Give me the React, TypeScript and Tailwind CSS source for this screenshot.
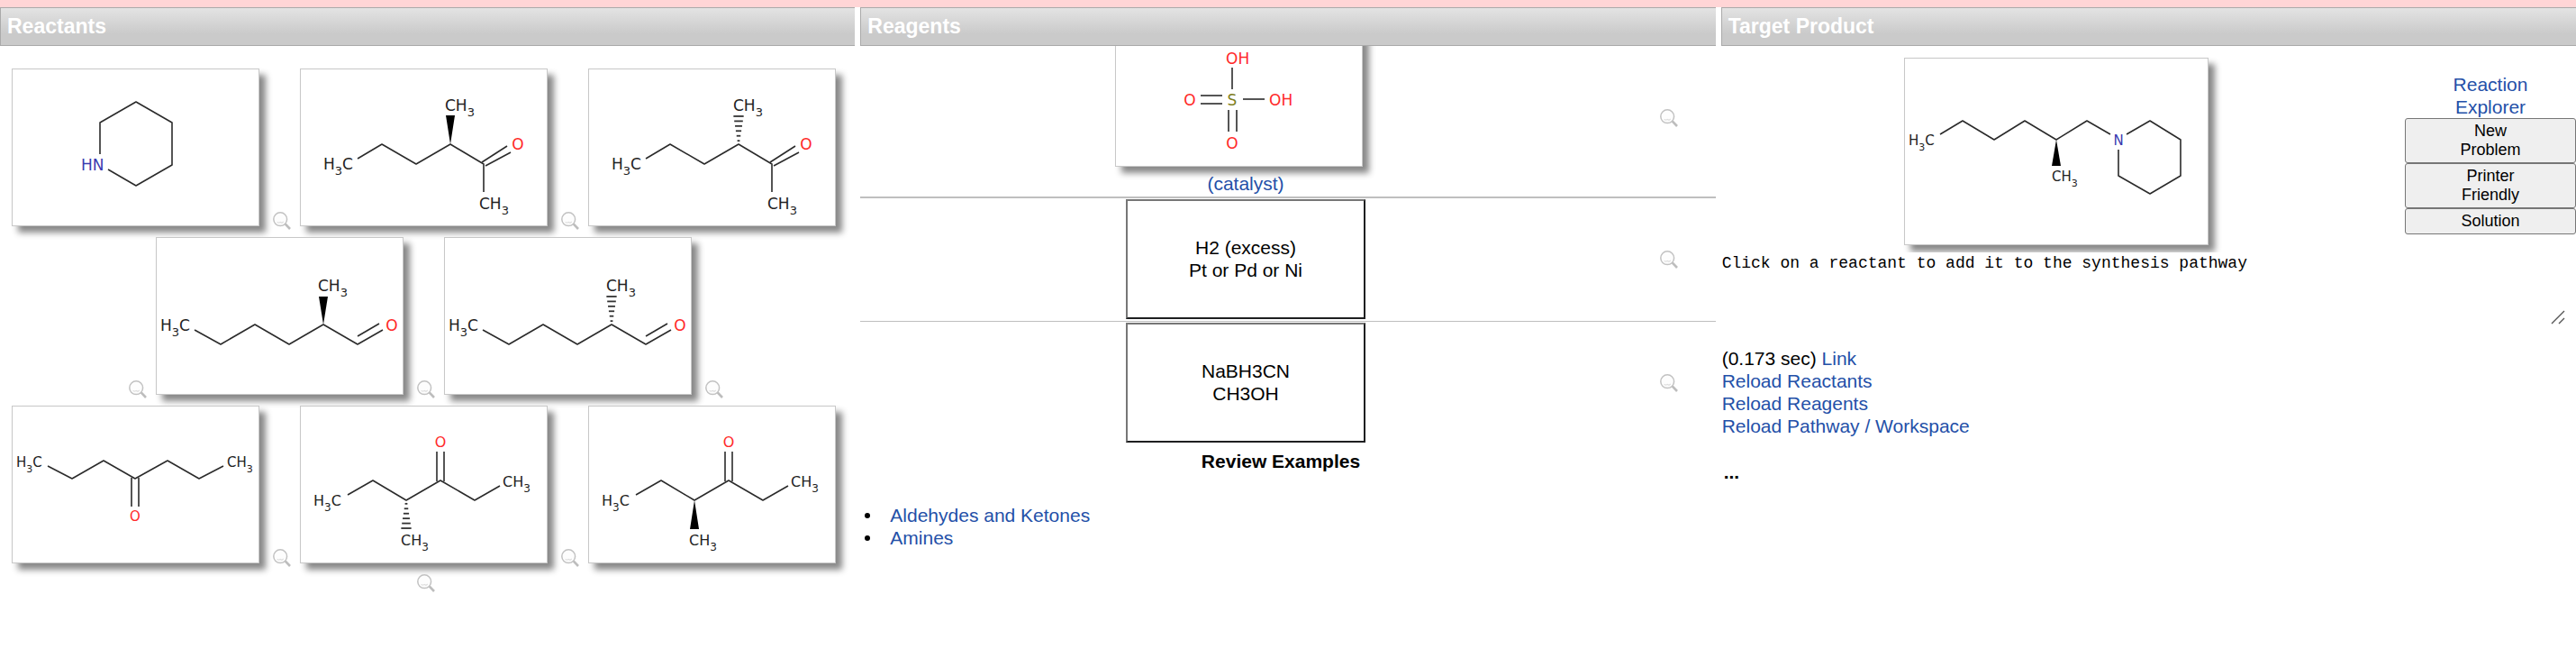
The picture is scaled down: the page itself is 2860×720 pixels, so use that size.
import { Fragment } from "react";
import type { ReactNode } from "react";

type Piece =
  | { kind: "bond"; points: string }
  | { kind: "wedge"; x: number; tip: number; base: number }
  | { kind: "hash"; x: number; tip: number; base: number }
  | { kind: "label"; x: number; y: number; text: string; color?: string; middle?: boolean };

const RED = "#ff2a2a";
const BLUE = "#3a3ab0";
const OLIVE = "#7f7f1f";

function bond(points: string): Piece {
  return { kind: "bond", points };
}

function wedge(x: number, tip: number, base: number): Piece {
  return { kind: "wedge", x, tip, base };
}

function hash(x: number, tip: number, base: number): Piece {
  return { kind: "hash", x, tip, base };
}

function label(x: number, y: number, text: string, color?: string, middle?: boolean): Piece {
  return { kind: "label", x, y, text, color, middle };
}

const methylKetone = (stereo: Piece): Piece[] => [
  label(26, 112, "H3C"),
  bond("64,100 91,84 129,106 167,84 204,106 204,137"),
  bond("202,104 230,86"),
  bond("206,108 234,93"),
  stereo,
  label(161, 47, "CH3"),
  label(242, 90, "O", RED, true),
  label(199, 156, "CH3"),
];

const aldehyde = (stereo: Piece): Piece[] => [
  label(5, 104, "H3C"),
  bond("43,103 72,119 110,97 148,119 186,97 224,119 252,103"),
  bond("224,110 248,96"),
  stereo,
  label(180, 60, "CH3"),
  label(262, 104, "O", RED, true),
];

const ethylKetone = (stereo: Piece): Piece[] => [
  label(15, 111, "H3C"),
  bond("53,99 81,83 118,105 156,83 194,105 222,89"),
  bond("152,84 152,51"),
  bond("160,84 160,51"),
  stereo,
  label(156, 46, "O", RED, true),
  label(225, 90, "CH3"),
  label(112, 155, "CH3"),
];

const piperidine: Piece[] = [
  bond("98,95 98,60 138,37 178,60 178,107 138,130 107,112"),
  label(77, 113, "HN", BLUE),
];

const heptanone: Piece[] = [
  label(5, 68, "H3C"),
  bond("40,67 67,81 102,61 137,81 173,61 208,81 235,67"),
  bond("133,80 133,112"),
  bond("141,80 141,112"),
  label(137, 128, "O", RED, true),
  label(239, 68, "CH3"),
];

const sulfuricAcid: Piece[] = [
  label(123, 61, "OH", RED),
  bond("130,65 130,89"),
  label(83, 107, "O", RED, true),
  bond("95,96 119,96"),
  bond("95,105 119,105"),
  label(130, 107, "S", OLIVE, true),
  bond("142,100 166,100"),
  label(171, 107, "OH", RED),
  bond("126,112 126,136"),
  bond("135,112 135,136"),
  label(130, 155, "O", RED, true),
];

const targetProduct: Piece[] = [
  label(5, 97, "H3C"),
  bond("40,85 65,70 100,91 134,70 169,91 203,70 229,85"),
  bond("247,85 273,70 307,91 307,131 273,151 238,131 238,102"),
  label(238, 97, "N", BLUE, true),
  wedge(169, 91, 120),
  label(164, 137, "CH3"),
];

const HASH_STEPS = [0.12, 0.29, 0.46, 0.63, 0.8, 0.97];

function Drawing({
  width,
  height,
  fontSize,
  pieces,
}: {
  width: number;
  height: number;
  fontSize: number;
  pieces: Piece[];
}) {
  const draw = (p: Piece, key: number): ReactNode => {
    if (p.kind === "bond") {
      return <polyline key={key} points={p.points} fill="none" stroke="#2b2b2b" strokeWidth="1.6" strokeLinejoin="round" />;
    }
    if (p.kind === "wedge") {
      return <polygon key={key} points={`${p.x},${p.tip} ${p.x - 5},${p.base} ${p.x + 5},${p.base}`} fill="#000" />;
    }
    if (p.kind === "hash") {
      return (
        <g key={key} stroke="#333" strokeWidth="1.8">
          {HASH_STEPS.map((s) => {
            const y = p.tip + (p.base - p.tip) * s;
            const half = 0.8 + 5 * s;
            return <line key={s} x1={p.x - half} x2={p.x + half} y1={y} y2={y} />;
          })}
        </g>
      );
    }
    const parts = p.text.split("3");
    return (
      <text key={key} x={p.x} y={p.y} fill={p.color ?? "#222"} fontSize={fontSize} textAnchor={p.middle ? "middle" : "start"}>
        {parts[0]}
        {parts.length > 1 && (
          <>
            <tspan dy="6" fontSize={fontSize - 4}>
              3
            </tspan>
            <tspan dy="-6">{parts[1]}</tspan>
          </>
        )}
      </text>
    );
  };
  return (
    <svg
      width={width}
      height={height}
      viewBox={`1 1 ${width} ${height}`}
      className="block font-['DejaVu_Sans',sans-serif]"
      aria-hidden="true"
    >
      {pieces.map(draw)}
    </svg>
  );
}

const cardStyle = "block shrink-0 cursor-pointer border border-[#c8c8c8] bg-white shadow-[7px_7px_7px_#888]";

function MoleculeCard({ pieces, fontSize, name }: { pieces: Piece[]; fontSize: number; name: string }) {
  return (
    <button type="button" aria-label={name} className={cardStyle}>
      <Drawing width={273} height={173} fontSize={fontSize} pieces={pieces} />
    </button>
  );
}

function Magnifier() {
  return (
    <a href="#zoom" aria-label="Enlarge" className="block shrink-0">
      <svg width="20" height="20" viewBox="0 0 20 20" fill="none" className="block">
        <path d="M13.4 13.2 19 19" stroke="#bdbdbd" strokeWidth="2.6" />
        <circle cx="8.2" cy="8.2" r="7.4" fill="#fdfdfd" stroke="#c2c2c2" strokeWidth="1.5" />
        <path d="M4.6 11.4 6.4 12.2 8.2 11.4 10 12.2 11.8 11" stroke="#dedede" strokeWidth="1.2" />
      </svg>
    </a>
  );
}

function PanelHeader({ children }: { children: ReactNode }) {
  return (
    <h2 className="border-y border-l border-[#aaa] bg-linear-to-b from-[#e3e3e3] to-[#cacaca] to-70% px-[7px] py-2 text-[23px] leading-[25px] font-bold text-white">
      {children}
    </h2>
  );
}

interface Reactant {
  name: string;
  pieces: Piece[];
  fontSize: number;
}

const reactants: Reactant[] = [
  { name: "piperidine", pieces: piperidine, fontSize: 17 },
  { name: "methyl ketone, wedge", pieces: methylKetone(wedge(167, 84, 52)), fontSize: 17 },
  { name: "methyl ketone, hash", pieces: methylKetone(hash(167, 84, 52)), fontSize: 17 },
  { name: "aldehyde, wedge", pieces: aldehyde(wedge(186, 97, 66)), fontSize: 17 },
  { name: "aldehyde, hash", pieces: aldehyde(hash(186, 97, 65)), fontSize: 17 },
  { name: "heptanone", pieces: heptanone, fontSize: 15 },
  { name: "ethyl ketone, hash", pieces: ethylKetone(hash(118, 105, 137)), fontSize: 16 },
  { name: "ethyl ketone, wedge", pieces: ethylKetone(wedge(118, 105, 137)), fontSize: 16 },
];

const linkStyle = "text-[#2450a8] hover:underline";

function Reactants() {
  return (
    <section>
      <PanelHeader>Reactants</PanelHeader>
      <div className="flex flex-wrap items-end justify-center gap-y-2 pt-[25px]">
        {reactants.map((r) => (
          <Fragment key={r.name}>
            <div className="mr-[11px] ml-0.5 pb-1">
              <MoleculeCard {...r} />
            </div>
            <div className="pr-2 pl-1">
              <Magnifier />
            </div>
          </Fragment>
        ))}
      </div>
    </section>
  );
}

function ReagentRow({ children, captioned }: { children: ReactNode; captioned?: boolean }) {
  return (
    <li className="grid grid-cols-[1fr_94px] items-center">
      <div className="flex flex-col items-center">{children}</div>
      <div className={captioned ? "flex justify-center pr-2.5 pb-2" : "flex justify-center pr-2.5"}>
        <Magnifier />
      </div>
    </li>
  );
}

function ConditionBox({ lines }: { lines: string[] }) {
  return (
    <button
      type="button"
      className="h-[133px] w-[266px] cursor-pointer border-2 border-t-[#767676] border-r-[#1e1f20] border-b-[#1e1f20] border-l-[#767676] bg-white pb-0.5 text-center"
    >
      {lines.map((line) => (
        <span key={line} className="block">
          {line}
        </span>
      ))}
    </button>
  );
}

const examples = [
  { href: "#aldehydes", title: "Aldehydes and Ketones" },
  { href: "#amines", title: "Amines" },
];

function Reagents() {
  return (
    <section>
      <PanelHeader>Reagents</PanelHeader>
      <ul className="overflow-hidden">
        <ReagentRow captioned>
          <div className="-mt-[41px] mr-[15px]">
            <MoleculeCard name="sulfuric acid" pieces={sulfuricAcid} fontSize={17} />
          </div>
          <a href="#catalyst" className={`mt-1.5 mb-0.5 ${linkStyle}`}>
            (catalyst)
          </a>
        </ReagentRow>
        <li className="mb-px h-0.5 bg-[#bfbfbf]" />
        <ReagentRow>
          <ConditionBox lines={["H2 (excess)", "Pt or Pd or Ni"]} />
        </ReagentRow>
        <li className="mt-0.5 mb-px h-px bg-[#bfbfbf]" />
        <ReagentRow>
          <ConditionBox lines={["NaBH3CN", "CH3OH"]} />
        </ReagentRow>
      </ul>
      <h3 className="mt-2 pr-4 text-center font-bold">Review Examples</h3>
      <ul className="mt-[35px] pl-[5px]">
        {examples.map((e) => (
          <li
            key={e.href}
            className="flex items-center gap-[22px] before:size-1.5 before:rounded-full before:bg-black before:content-['']"
          >
            <a href={e.href} className={linkStyle}>
              {e.title}
            </a>
          </li>
        ))}
      </ul>
    </section>
  );
}

const buttonStyle =
  "w-full cursor-pointer rounded-[3px] border border-[#767676] bg-[#efefef] px-2 py-[3px] text-[18px] leading-[21px] text-black";

function TargetProduct() {
  return (
    <section>
      <PanelHeader>Target Product</PanelHeader>
      <div className="grid grid-cols-[1fr_190px] items-start">
        <div className="flex justify-center pt-[13px] pb-2">
          <div className={`${cardStyle} mr-[15px]`}>
            <Drawing width={336} height={206} fontSize={15} pieces={targetProduct} />
          </div>
        </div>
        <div className="flex flex-col pt-[30px] text-center">
          <a href="#explorer" className={linkStyle}>
            Reaction
            <br />
            Explorer
          </a>
          <button type="button" className={buttonStyle}>
            New
            <br />
            Problem
          </button>
          <button type="button" className={buttonStyle}>
            Printer
            <br />
            Friendly
          </button>
          <button type="button" className={buttonStyle}>
            Solution
          </button>
        </div>
      </div>
      <div className="relative mr-2.5">
        <textarea
          aria-label="Messages"
          readOnly
          rows={4}
          defaultValue="Click on a reactant to add it to the synthesis pathway"
          className="block w-full resize-none bg-white px-px py-0.5 font-['Liberation_Mono',monospace] text-[18px] leading-5 text-black outline-none"
        />
        <svg className="absolute right-0.5 bottom-1" width="16" height="16" viewBox="0 0 16 16" aria-hidden="true">
          <path d="M1 15 15 1M9 15 15 9" stroke="#555" strokeWidth="1.4" />
        </svg>
      </div>
      <div className="flex flex-col items-start px-px pt-[21px]">
        <p>
          (0.173 sec){" "}
          <a href="#link" className={linkStyle}>
            Link
          </a>
        </p>
        <a href="#reactants" className={linkStyle}>
          Reload Reactants
        </a>
        <a href="#reagents" className={linkStyle}>
          Reload Reagents
        </a>
        <a href="#pathway" className={linkStyle}>
          Reload Pathway / Workspace
        </a>
        <p className="pt-[26px] pl-0.5 font-bold">...</p>
      </div>
    </section>
  );
}

export default function App() {
  return (
    <div className="min-h-screen bg-white font-['Liberation_Sans',Arial,sans-serif] text-[21px] leading-[25px] text-black">
      <div className="h-2 bg-[#ffd5d6]" />
      <main className="grid grid-cols-3 gap-x-1.5">
        <Reactants />
        <Reagents />
        <TargetProduct />
      </main>
    </div>
  );
}
